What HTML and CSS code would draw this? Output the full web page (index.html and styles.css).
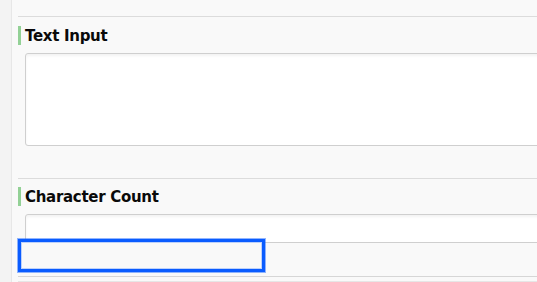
FILE: index.html
```html
<!DOCTYPE html>
<html>
<head>
<meta charset="utf-8">
<link rel="stylesheet" href="styles.css">
</head>
<body>
<div class="app">
  <aside class="rail"></aside>
  <main class="main">
    <div class="topbar"></div>
    <section class="field">
      <h2 class="label">Text Input</h2>
      <div class="textarea"></div>
    </section>
    <section class="field field-count">
      <h2 class="label">Character Count</h2>
      <div class="input"></div>
      <div class="count-row"></div>
    </section>
    <div class="next-line"></div>
  </main>
  <div class="focus-box"></div>
</div>
</body>
</html>
```
FILE: styles.css
```css
html, body {
  margin: 0;
  padding: 0;
  height: 100%;
  overflow: hidden;
  background: #f9f9f9;
  font-family: "DejaVu Sans", Verdana, sans-serif;
}
.app {
  position: relative;
  display: flex;
  height: 282px;
  overflow: hidden;
}
.rail {
  flex: 0 0 11px;
  background: #f3f3f3;
  border-right: 1px solid #e7e7e7;
}
.main {
  flex: 1;
  min-width: 0;
  overflow: hidden;
  background: #f9f9f9;
}
.topbar {
  height: 16px;
  margin-left: 6px;
  border-bottom: 1px solid #dcdcdc;
}
.field {
  margin-left: 6px;
  padding: 9px 0 32px 0;
  border-bottom: 1px solid #dcdcdc;
}
.label {
  margin: 0 0 8px 0;
  border-left: 3px solid #93d196;
  padding: 1px 0 0 4px;
  font-size: 15px;
  letter-spacing: -0.3px;
  line-height: 18px;
  font-weight: bold;
  color: #0a0a0a;
}
.textarea {
  margin-left: 7px;
  width: 560px;
  height: 93px;
  box-sizing: border-box;
  background: #fff;
  border: 1px solid #cfcfcf;
  border-radius: 3px;
  box-shadow: inset 0 2px 3px rgba(0,0,0,0.05);
}
.field-count {
  padding: 8px 0 0 0;
  border-bottom: 1px solid #d6d6d6;
}
.input {
  margin-left: 7px;
  width: 560px;
  height: 29px;
  box-sizing: border-box;
  background: #fff;
  border: 1px solid #cfcfcf;
  border-radius: 3px;
  box-shadow: inset 0 2px 3px rgba(0,0,0,0.05);
}
.count-row {
  height: 33px;
}
.next-line {
  margin: 4px 0 0 6px;
  border-top: 1px solid #e6e6e6;
}
.focus-box {
  position: absolute;
  left: 18px;
  top: 239px;
  width: 247px;
  height: 33px;
  box-sizing: border-box;
  border: 3px solid #0a5cff;
  box-shadow: 0 0 0 1px rgba(10, 92, 255, 0.45), inset 0 0 0 1px rgba(10, 92, 255, 0.25);
  background: #f9f9f9;
}
```
